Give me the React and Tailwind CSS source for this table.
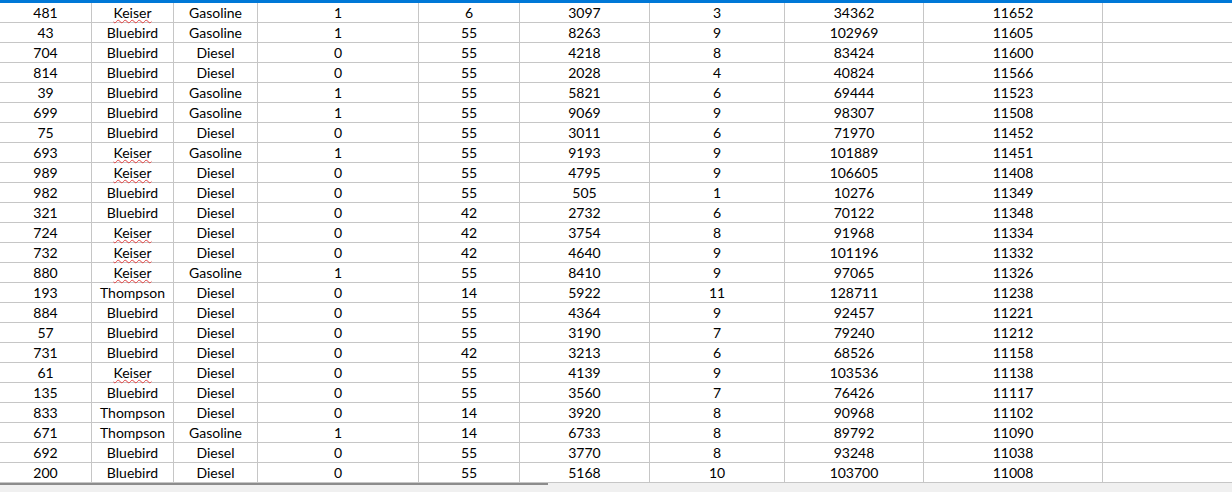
import React from "react";

const rows = [
    [481, "Keiser", "Gasoline", 1, 6, 3097, 3, 34362, 11652],
    [43, "Bluebird", "Gasoline", 1, 55, 8263, 9, 102969, 11605],
    [704, "Bluebird", "Diesel", 0, 55, 4218, 8, 83424, 11600],
    [814, "Bluebird", "Diesel", 0, 55, 2028, 4, 40824, 11566],
    [39, "Bluebird", "Gasoline", 1, 55, 5821, 6, 69444, 11523],
    [699, "Bluebird", "Gasoline", 1, 55, 9069, 9, 98307, 11508],
    [75, "Bluebird", "Diesel", 0, 55, 3011, 6, 71970, 11452],
    [693, "Keiser", "Gasoline", 1, 55, 9193, 9, 101889, 11451],
    [989, "Keiser", "Diesel", 0, 55, 4795, 9, 106605, 11408],
    [982, "Bluebird", "Diesel", 0, 55, 505, 1, 10276, 11349],
    [321, "Bluebird", "Diesel", 0, 42, 2732, 6, 70122, 11348],
    [724, "Keiser", "Diesel", 0, 42, 3754, 8, 91968, 11334],
    [732, "Keiser", "Diesel", 0, 42, 4640, 9, 101196, 11332],
    [880, "Keiser", "Gasoline", 1, 55, 8410, 9, 97065, 11326],
    [193, "Thompson", "Diesel", 0, 14, 5922, 11, 128711, 11238],
    [884, "Bluebird", "Diesel", 0, 55, 4364, 9, 92457, 11221],
    [57, "Bluebird", "Diesel", 0, 55, 3190, 7, 79240, 11212],
    [731, "Bluebird", "Diesel", 0, 42, 3213, 6, 68526, 11158],
    [61, "Keiser", "Diesel", 0, 55, 4139, 9, 103536, 11138],
    [135, "Bluebird", "Diesel", 0, 55, 3560, 7, 76426, 11117],
    [833, "Thompson", "Diesel", 0, 14, 3920, 8, 90968, 11102],
    [671, "Thompson", "Gasoline", 1, 14, 6733, 8, 89792, 11090],
    [692, "Bluebird", "Diesel", 0, 55, 3770, 8, 93248, 11038],
    [200, "Bluebird", "Diesel", 0, 55, 5168, 10, 103700, 11008],
];

const Cell = ({ children, last }) => (
    <div
        className={`h-[20px] flex items-center justify-center border-b border-[#c6c6c6] ${last ? "" : "border-r"}`}
    >
        {children}
    </div>
);

const App = () => {
    return (
        <div className="w-[1232px] h-[492px] overflow-hidden bg-white flex flex-col font-['Lato',_sans-serif] text-[14px] text-black">
            {/* selection bar */}
            <div className="h-[3px] bg-[#0078d7]" />

            {/* sheet */}
            <div className="grid grid-cols-[92px_82px_84px_161px_101px_130px_135px_139px_179px_1fr]">
                {rows.map((row, idx) => (
                    <React.Fragment key={idx}>
                        {row.map((val, i) => (
                            <Cell key={i}>
                                {val === "Keiser" ? (
                                    <span className="underline decoration-wavy decoration-[#e04040] decoration-1 underline-offset-[1px]">
                                        {val}
                                    </span>
                                ) : (
                                    val
                                )}
                            </Cell>
                        ))}
                        <Cell last />
                    </React.Fragment>
                ))}
            </div>

            {/* horizontal scrollbar */}
            <div className="flex-1 bg-[#f0f0f0] flex items-start">
                <div className="w-[548px] h-[2px] bg-[#8c8c8c]" />
            </div>
        </div>
    );
};

export default App;
